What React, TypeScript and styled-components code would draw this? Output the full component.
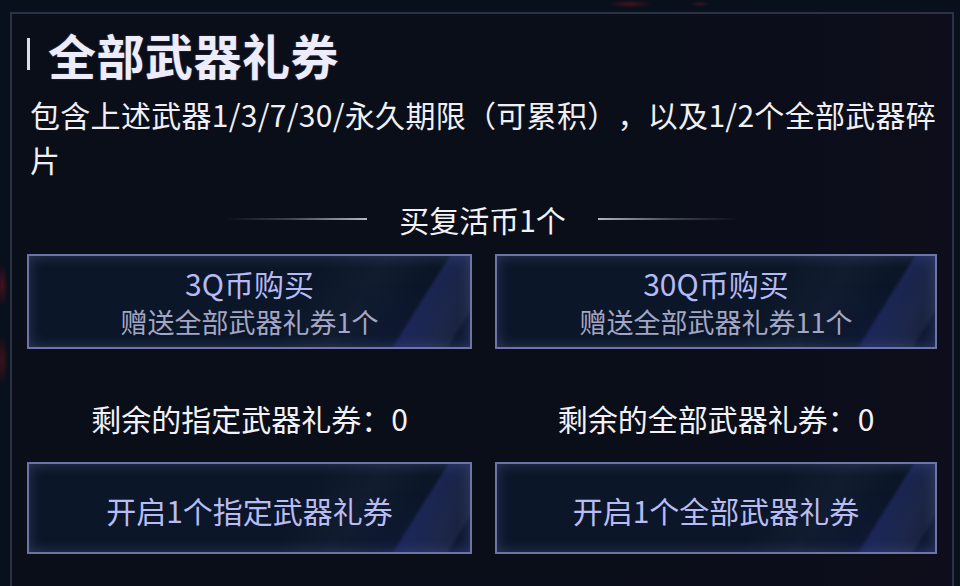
import React from "react";
import styled, { createGlobalStyle } from "styled-components";

const Global = createGlobalStyle`
  html, body {
    margin: 0;
    padding: 0;
    height: 100%;
  }
  body {
    width: 960px;
    height: 586px;
    overflow: hidden;
    background:
      radial-gradient(ellipse 6px 22px at 2px 285px, rgba(140, 20, 30, 0.45), transparent),
      radial-gradient(ellipse 6px 26px at 2px 360px, rgba(140, 20, 30, 0.4), transparent),
      radial-gradient(ellipse 22px 4px at 630px 4px, rgba(140, 20, 30, 0.45), transparent),
      radial-gradient(ellipse 10px 3px at 700px 4px, rgba(140, 20, 30, 0.35), transparent),
      #08101c;
    font-family: "Noto Sans CJK SC", "Noto Sans", sans-serif;
    color: #f2f2f7;
  }
  #root { height: 100%; }
`;

const Page = styled.div`
  height: 100%;
  padding: 12px 6px 0 10px;
  box-sizing: border-box;
`;

const Panel = styled.section`
  height: 100%;
  box-sizing: border-box;
  border: 2px solid #2a3345;
  border-bottom: none;
  background: linear-gradient(90deg, #0a0e19 0%, #0b0e1a 85%, #0f0d1b 100%);
  padding: 12px 15px 0 15px;
  display: flex;
  flex-direction: column;
`;

const TitleRow = styled.div`
  display: flex;
  align-items: center;
  gap: 18px;
  height: 56px;
`;

const TitleBar = styled.span`
  width: 3px;
  height: 32px;
  background: #dcdcea;
  flex: none;
`;

const Title = styled.h1`
  margin: 0;
  font-size: 48px;
  line-height: 56px;
  font-weight: 700;
  color: #ececfb;
  text-shadow: 0 0 2px rgba(200, 200, 255, 0.3);
  letter-spacing: 0.5px;
`;

const Description = styled.p`
  margin: 10px 0 0 3px;
  font-size: 30px;
  line-height: 45px;
  color: #f0f0f4;
  letter-spacing: 0.3px;
  text-spacing-trim: space-all;
  font-feature-settings: "halt" 0, "palt" 0;
`;

const Divider = styled.div`
  margin-top: 17px;
  height: 40px;
  display: flex;
  align-items: center;
  justify-content: center;
  gap: 32px;
  font-size: 30px;
  color: #f2f2f6;
  padding-left: 1px;
`;

const DividerLine = styled.span<{ $side: "left" | "right" }>`
  width: 142px;
  height: 2px;
  background: linear-gradient(
    ${(p) => (p.$side === "left" ? "90deg" : "270deg")},
    rgba(160, 165, 175, 0) 0%,
    rgba(160, 165, 175, 0.35) 45%,
    rgba(200, 200, 205, 0.9) 100%
  );
`;

const Columns = styled.div`
  margin-top: 15px;
  display: grid;
  grid-template-columns: 445px 442px;
  column-gap: 23px;
`;

const Column = styled.div`
  display: flex;
  flex-direction: column;
`;

const GlassButton = styled.button<{ $height: number }>`
  position: relative;
  overflow: hidden;
  height: ${(p) => p.$height}px;
  width: 100%;
  box-sizing: border-box;
  border: 2px solid #6d74a6;
  background:
    linear-gradient(122deg, transparent 60%, rgba(120, 130, 170, 0.06) 72%, transparent 82%),
    #0b1628;
  box-shadow: inset 0 0 14px rgba(120, 130, 200, 0.32);
  display: flex;
  flex-direction: column;
  align-items: center;
  justify-content: center;
  font-family: inherit;
  padding: 0;
  cursor: pointer;

  &::after {
    content: "";
    position: absolute;
    inset: 0;
    background:
      linear-gradient(
        122deg,
        transparent 84%,
        rgba(60, 70, 170, 0.32) 85%,
        rgba(90, 100, 180, 0.2) 91%,
        rgba(120, 125, 170, 0.12) 95%,
        transparent 96%
      ),
      linear-gradient(0deg, rgba(40, 50, 160, 0.12), transparent 70%);
    -webkit-mask: linear-gradient(90deg, transparent 70%, #000 85%);
    mask: linear-gradient(90deg, transparent 70%, #000 85%);
    pointer-events: none;
  }
`;

const BuyTitle = styled.span`
  position: relative;
  z-index: 1;
  font-size: 30px;
  line-height: 40px;
  color: #b6baf3;
`;

const BuySub = styled.span`
  position: relative;
  z-index: 1;
  font-size: 27px;
  line-height: 38px;
  color: #a3a6c4;
`;

const OpenLabel = styled.span`
  position: relative;
  z-index: 1;
  font-size: 30px;
  line-height: 40px;
  color: #b9bcf2;
  margin-top: 4px;
`;

const Remaining = styled.div`
  margin-top: 49px;
  height: 40px;
  line-height: 40px;
  text-align: center;
  font-size: 30px;
  color: #f2f2f6;
  margin-bottom: 24px;
`;

const offers = [
  { price: "3Q币购买", gift: "赠送全部武器礼券1个", remain: "剩余的指定武器礼券：0", open: "开启1个指定武器礼券" },
  { price: "30Q币购买", gift: "赠送全部武器礼券11个", remain: "剩余的全部武器礼券：0", open: "开启1个全部武器礼券" },
];

export default function App() {
  return (
    <>
      <Global />
      <Page>
        <Panel>
          <TitleRow>
            <TitleBar />
            <Title>全部武器礼券</Title>
          </TitleRow>
          <Description>
            包含上述武器1/3/7/30/永久期限（可累积），以及1/2个全部武器碎片
          </Description>
          <Divider>
            <DividerLine $side="left" />
            <span>买复活币1个</span>
            <DividerLine $side="right" />
          </Divider>
          <Columns>
            {offers.map((o) => (
              <Column key={o.price}>
                <GlassButton $height={95}>
                  <BuyTitle>{o.price}</BuyTitle>
                  <BuySub>{o.gift}</BuySub>
                </GlassButton>
                <Remaining>{o.remain}</Remaining>
                <GlassButton $height={92}>
                  <OpenLabel>{o.open}</OpenLabel>
                </GlassButton>
              </Column>
            ))}
          </Columns>
        </Panel>
      </Page>
    </>
  );
}
